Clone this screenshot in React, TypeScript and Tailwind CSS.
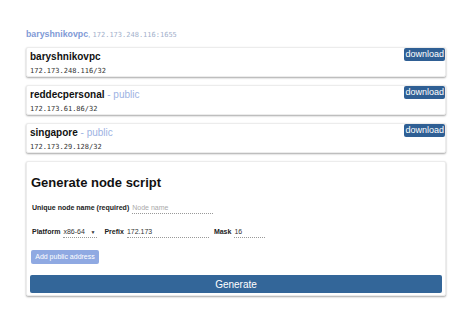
import React from "react";

const sans = { fontFamily: '"Liberation Sans", Arial, sans-serif' };

function NodeCard({ name, ip, isPublic }: { name: string; ip: string; isPublic?: boolean }) {
  return (
    <div className="flex justify-between bg-white border border-[#ececec] shadow-[0_1px_2px_rgba(0,0,0,0.35)] rounded-[2px]">
      <div className="pl-[3px] pt-[3px] flex flex-col gap-[3px]">
        <div className="text-[10px] leading-[12px] text-[#111]">
          <span className="font-bold">{name}</span>
          {isPublic && <span className="text-[#9db3e3]"> - public</span>}
        </div>
        <div className="text-[7px] leading-[10px] text-[#333]" style={{ fontFamily: '"DejaVu Sans Mono", "Liberation Mono", monospace' }}>
          {ip}
        </div>
      </div>
      <div className="self-start h-[13px] px-[1px] flex items-center bg-[#2f5f94] text-white text-[9px] leading-[13px] rounded-[2px]">
        download
      </div>
    </div>
  );
}

function Field({ label, value, placeholder, width }: { label: string; value?: string; placeholder?: string; width: string }) {
  return (
    <div className="flex items-center gap-[3px]">
      <span className="font-bold text-[#222]">{label}</span>
      <span className={`${width} border-b border-dotted border-[#999] leading-[10px]`}>
        {value ? <span className="text-[#333]">{value}</span> : <span className="text-[#aaa]">{placeholder}</span>}
      </span>
    </div>
  );
}

export default function App() {
  return (
    <div className="w-[474px] h-[328px] bg-white" style={sans}>
      <div className="w-[420px] ml-[26px] pt-[28px] flex flex-col">
        <div className="h-[12px] leading-[12px] flex items-baseline text-[#7f9ad6]">
          <span className="font-bold text-[8.8px]">baryshnikovpc</span>
          <span className="text-[8px]">,&nbsp;</span>
          <span className="text-[7px] text-[#a2b0cb]" style={{ fontFamily: '"DejaVu Sans Mono", "Liberation Mono", monospace' }}>
            172.173.248.116:1655
          </span>
        </div>
        <div className="mt-[7px] flex flex-col gap-[8px]">
          <NodeCard name="baryshnikovpc" ip="172.173.248.116/32" />
          <NodeCard name="reddecpersonal" ip="172.173.61.86/32" isPublic />
          <NodeCard name="singapore" ip="172.173.29.128/32" isPublic />
          <div className="bg-white border border-[#ececec] shadow-[0_1px_2px_rgba(0,0,0,0.35)] rounded-[2px] px-[3px] pb-[2px] pt-[13px] flex flex-col">
            <div className="text-[13px] leading-[16px] font-bold text-[#111] pl-[1px]">Generate node script</div>
            <div className="mt-[11px] h-[12px] flex items-center text-[7px] pl-[2px]">
              <Field label="Unique node name (required)" placeholder="Node name" width="w-[81px]" />
            </div>
            <div className="mt-[12px] h-[12px] flex items-center text-[7px] pl-[2px]">
              <div className="flex items-center gap-[3px]">
                <span className="font-bold text-[#222]">Platform</span>
                <span className="w-[34px] border-b border-dotted border-[#999] leading-[10px] text-[#333] flex justify-between pr-[2px]">
                  <span>x86-64</span>
                  <span className="text-[5px]">▼</span>
                </span>
              </div>
              <div className="ml-[7px]">
                <Field label="Prefix" value="172.173" width="w-[82px]" />
              </div>
              <div className="ml-[5px]">
                <Field label="Mask" value="16" width="w-[31px]" />
              </div>
            </div>
            <div className="mt-[12px] pl-[1px] flex">
              <div className="flex items-center h-[14px] w-[68px] justify-center bg-[#8fa9e2] text-white text-[7px] leading-[14px] rounded-[2px]">
                Add public address
              </div>
            </div>
            <div className="mt-[11px] h-[18px] flex items-center justify-center bg-[#336699] text-white text-[10px] rounded-[2px]">
              Generate
            </div>
          </div>
        </div>
      </div>
    </div>
  );
}
